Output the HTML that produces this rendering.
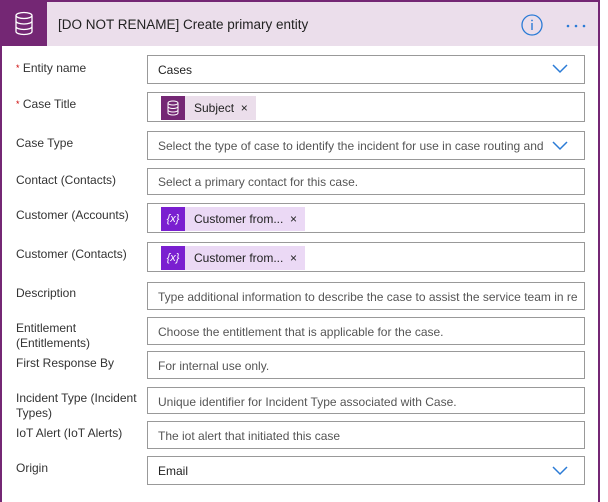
<html><head><style>
body{margin:0;width:608px;height:488px;overflow:hidden;background:#fff;font-family:"Liberation Sans",sans-serif;font-size:12px;color:#333}
.card{position:absolute;left:0;top:0;width:596px;height:500px;border:2px solid #742774;border-bottom:none;background:#fff}
.hdr{position:absolute;left:0;top:0;width:596px;height:44px;background:#ebdeeb}
.ico{position:absolute;left:0;top:0;width:45px;height:44px;background:#742774}
.title{position:absolute;left:56px;top:15px;font-size:13.5px;color:#222}
.lbl{position:absolute;left:16px;font-size:12px;color:#333;line-height:15px;width:125px}
.req{color:#c00;font-size:9px;vertical-align:top}
.box{position:absolute;left:147px;width:438px;border:1px solid #999;background:#fff;box-sizing:border-box}
.ph{position:absolute;left:10px;top:7px;color:#555;white-space:nowrap;overflow:hidden;width:390px}
.val{position:absolute;left:10px;top:7px;color:#222}
.chev{position:absolute;right:16px;top:8px}
.tok{position:absolute;left:13px;top:3px;height:24px;background:#ebd9f5;display:flex;align-items:center;padding-right:8px;color:#222}
.ti{width:24px;height:24px;background:#7a1fd0;color:#fff;font-size:11px;display:flex;align-items:center;justify-content:center;margin-right:9px;font-style:italic}
</style></head><body>
<div class="card">
<div class="hdr"><div class="ico">
<svg width="45" height="44" viewBox="0 0 45 43"><g fill="none" stroke="#fff" stroke-width="1.3"><ellipse cx="22" cy="13" rx="8" ry="3"/><path d="M14 13v16c0 1.7 3.6 3 8 3s8-1.3 8-3V13M14 18.5c0 1.7 3.6 3 8 3s8-1.3 8-3M14 24c0 1.7 3.6 3 8 3s8-1.3 8-3"/></g></svg></div>
<div class="title">[DO NOT RENAME] Create primary entity</div>
<svg style="position:absolute;left:519px;top:12px" width="22" height="22"><circle cx="11" cy="11" r="10" fill="none" stroke="#2b7bd6" stroke-width="1.3"/><rect x="10.3" y="9" width="1.4" height="7" fill="#2b7bd6"/><circle cx="11" cy="6.5" r="0.9" fill="#2b7bd6"/></svg>
<svg style="position:absolute;left:564px;top:22px" width="22" height="4"><circle cx="2" cy="2" r="1.3" fill="#2b7bd6"/><circle cx="10" cy="2" r="1.3" fill="#2b7bd6"/><circle cx="18" cy="2" r="1.3" fill="#2b7bd6"/></svg>
</div>
</div>
<div class="lbl" style="top:61px"><span class="req">*</span> Entity name</div>
<div class="box" style="top:55px;height:29px"><div class="val">Cases</div><svg class="chev" width="16" height="10"><path d="M1 1l7 7 7-7" fill="none" stroke="#2b7bd6" stroke-width="1.5"/></svg></div>
<div class="lbl" style="top:97px"><span class="req">*</span> Case Title</div>
<div class="box" style="top:92px;height:30px"><div class="tok" style="background:#ebdeeb"><div class="ti" style="background:#742774"><svg width="14" height="16" viewBox="0 0 14 16"><g fill="none" stroke="#fff" stroke-width="1"><ellipse cx="7" cy="3" rx="5" ry="2"/><path d="M2 3v10c0 1.1 2.2 2 5 2s5-.9 5-2V3M2 6.5c0 1.1 2.2 2 5 2s5-.9 5-2M2 10c0 1.1 2.2 2 5 2s5-.9 5-2"/></g></svg></div>Subject&nbsp;&nbsp;×</div></div>
<div class="lbl" style="top:136px">Case Type</div>
<div class="box" style="top:131px;height:29px"><div class="ph">Select the type of case to identify the incident for use in case routing and</div><svg class="chev" width="16" height="10" style="top:9px"><path d="M1 1l7 7 7-7" fill="none" stroke="#2b7bd6" stroke-width="1.5"/></svg></div>
<div class="lbl" style="top:173px">Contact (Contacts)</div>
<div class="box" style="top:168px;height:27px"><div class="ph" style="top:6px">Select a primary contact for this case.</div></div>
<div class="lbl" style="top:208px">Customer (Accounts)</div>
<div class="box" style="top:203px;height:30px"><div class="tok"><div class="ti">{<i>x</i>}</div>Customer from...&nbsp;&nbsp;×</div></div>
<div class="lbl" style="top:247px">Customer (Contacts)</div>
<div class="box" style="top:242px;height:30px"><div class="tok"><div class="ti">{<i>x</i>}</div>Customer from...&nbsp;&nbsp;×</div></div>
<div class="lbl" style="top:286px">Description</div>
<div class="box" style="top:282px;height:28px"><div class="ph" style="width:420px">Type additional information to describe the case to assist the service team in re</div></div>
<div class="lbl" style="top:321px">Entitlement<br>(Entitlements)</div>
<div class="box" style="top:317px;height:28px"><div class="ph">Choose the entitlement that is applicable for the case.</div></div>
<div class="lbl" style="top:356px">First Response By</div>
<div class="box" style="top:351px;height:28px"><div class="ph">For internal use only.</div></div>
<div class="lbl" style="top:391px">Incident Type (Incident<br>Types)</div>
<div class="box" style="top:387px;height:27px"><div class="ph">Unique identifier for Incident Type associated with Case.</div></div>
<div class="lbl" style="top:426px">IoT Alert (IoT Alerts)</div>
<div class="box" style="top:421px;height:28px"><div class="ph">The iot alert that initiated this case</div></div>
<div class="lbl" style="top:461px">Origin</div>
<div class="box" style="top:456px;height:29px"><div class="val">Email</div><svg class="chev" width="16" height="10" style="top:9px"><path d="M1 1l7 7 7-7" fill="none" stroke="#2b7bd6" stroke-width="1.5"/></svg></div>
</body></html>
